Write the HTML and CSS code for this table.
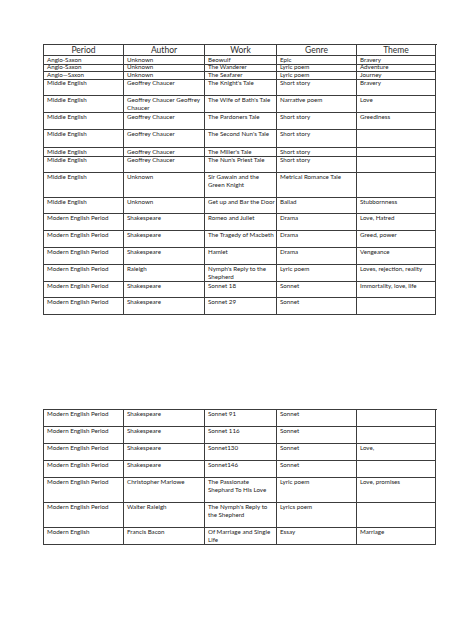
FILE: index.html
```html
<!DOCTYPE html>
<html lang="en">
<head>
<meta charset="utf-8">
<title>Literature periods</title>
<link rel="stylesheet" href="styles.css">
</head>
<body>
<div class="page">
  <div class="table">
    <div class="row head"><div class="c">Period</div><div class="c">Author</div><div class="c">Work</div><div class="c">Genre</div><div class="c">Theme</div></div>
    <div class="row h7"><div class="c">Anglo-Saxon</div><div class="c">Unknown</div><div class="c">Beowulf</div><div class="c">Epic</div><div class="c">Bravery</div></div>
    <div class="row h8"><div class="c">Anglo-Saxon</div><div class="c">Unknown</div><div class="c">The Wanderer</div><div class="c">Lyric poem</div><div class="c">Adventure</div></div>
    <div class="row h8"><div class="c">Anglo—Saxon</div><div class="c">Unknown</div><div class="c">The Seafarer</div><div class="c">Lyric poem</div><div class="c">Journey</div></div>
    <div class="row h17"><div class="c">Middle English</div><div class="c">Geoffrey Chaucer</div><div class="c">The Knight's Tale</div><div class="c">Short story</div><div class="c">Bravery</div></div>
    <div class="row h17"><div class="c">Middle English</div><div class="c">Geoffrey Chaucer Geoffrey<br>Chaucer</div><div class="c">The Wife of Bath's Tale</div><div class="c">Narrative poem</div><div class="c">Love</div></div>
    <div class="row h17"><div class="c">Middle English</div><div class="c">Geoffrey Chaucer</div><div class="c">The Pardoners Tale</div><div class="c">Short story</div><div class="c">Greediness</div></div>
    <div class="row h18"><div class="c">Middle English</div><div class="c">Geoffrey Chaucer</div><div class="c">The Second Nun's Tale</div><div class="c">Short story</div><div class="c"></div></div>
    <div class="row h8"><div class="c">Middle English</div><div class="c">Geoffrey Chaucer</div><div class="c">The Miller's Tale</div><div class="c">Short story</div><div class="c"></div></div>
    <div class="row h17"><div class="c">Middle English</div><div class="c">Geoffrey Chaucer</div><div class="c">The Nun's Priest Tale</div><div class="c">Short story</div><div class="c"></div></div>
    <div class="row h25"><div class="c">Middle English</div><div class="c">Unknown</div><div class="c">Sir Gawain and the<br>Green Knight</div><div class="c">Metrical Romance Tale</div><div class="c"></div></div>
    <div class="row h16"><div class="c">Middle English</div><div class="c">Unknown</div><div class="c">Get up and Bar the Door</div><div class="c">Ballad</div><div class="c">Stubbornness</div></div>
    <div class="row h17"><div class="c">Modern English Period</div><div class="c">Shakespeare</div><div class="c">Romeo and Juliet</div><div class="c">Drama</div><div class="c">Love, Hatred</div></div>
    <div class="row h17"><div class="c">Modern English Period</div><div class="c">Shakespeare</div><div class="c">The Tragedy of Macbeth</div><div class="c">Drama</div><div class="c">Greed, power</div></div>
    <div class="row h17"><div class="c">Modern English Period</div><div class="c">Shakespeare</div><div class="c">Hamlet</div><div class="c">Drama</div><div class="c">Vengeance</div></div>
    <div class="row h17"><div class="c">Modern English Period</div><div class="c">Raleigh</div><div class="c">Nymph's Reply to the<br>Shepherd</div><div class="c">Lyric poem</div><div class="c">Loves, rejection, reality</div></div>
    <div class="row h16"><div class="c">Modern English Period</div><div class="c">Shakespeare</div><div class="c">Sonnet 18</div><div class="c">Sonnet</div><div class="c">Immortality, love, life</div></div>
    <div class="row h17"><div class="c">Modern English Period</div><div class="c">Shakespeare</div><div class="c">Sonnet 29</div><div class="c">Sonnet</div><div class="c"></div></div>
  </div>

  <div class="table second">
    <div class="row h17"><div class="c">Modern English Period</div><div class="c">Shakespeare</div><div class="c">Sonnet 91</div><div class="c">Sonnet</div><div class="c"></div></div>
    <div class="row h17"><div class="c">Modern English Period</div><div class="c">Shakespeare</div><div class="c">Sonnet 116</div><div class="c">Sonnet</div><div class="c"></div></div>
    <div class="row h17"><div class="c">Modern English Period</div><div class="c">Shakespeare</div><div class="c">Sonnet130</div><div class="c">Sonnet</div><div class="c">Love,</div></div>
    <div class="row h17"><div class="c">Modern English Period</div><div class="c">Shakespeare</div><div class="c">Sonnet146</div><div class="c">Sonnet</div><div class="c"></div></div>
    <div class="row h25"><div class="c">Modern English Period</div><div class="c">Christopher Marlowe</div><div class="c">The Passionate<br>Shephard To His Love</div><div class="c">Lyric poem</div><div class="c">Love, promises</div></div>
    <div class="row h25"><div class="c">Modern English Period</div><div class="c">Walter Raleigh</div><div class="c">The Nymph's Reply to<br>the Shepherd</div><div class="c">Lyrics poem</div><div class="c"></div></div>
    <div class="row h17"><div class="c">Modern English</div><div class="c">Francis Bacon</div><div class="c">Of Marriage and Single<br>Life</div><div class="c">Essay</div><div class="c">Marriage</div></div>
  </div>
</div>
</body>
</html>
```

FILE: styles.css
```css
html, body {
  margin: 0;
  padding: 0;
  background: #ffffff;
}

.page {
  padding: 44px 0 0 43px;
  font-family: Lato, "Liberation Sans", sans-serif;
  color: #1a1a1a;
}

.table {
  width: 393px;
  border-top: 1px solid #3c3c3c;
  border-left: 1px solid #3c3c3c;
  box-sizing: content-box;
}

.table.second {
  margin-top: 94px;
}

.row {
  display: grid;
  grid-template-columns: 80px 81px 72px 80px 79px;
}

.c {
  box-sizing: border-box;
  border-right: 1px solid #3c3c3c;
  border-bottom: 1px solid #3c3c3c;
  padding: 0 0 0 3px;
  font-size: 6.2px;
  line-height: 7.7px;
  white-space: nowrap;
  overflow: visible;
}

.head .c {
  font-size: 8.5px;
  line-height: 10px;
  text-align: center;
  padding: 0;
  color: #2e2e2e;
}

.head { height: 11px; }
.h7 { height: 7px; }
.h8 { height: 8px; }
.h16 { height: 16px; }
.h17 { height: 17px; }
.h18 { height: 18px; }
.h25 { height: 25px; }
```
